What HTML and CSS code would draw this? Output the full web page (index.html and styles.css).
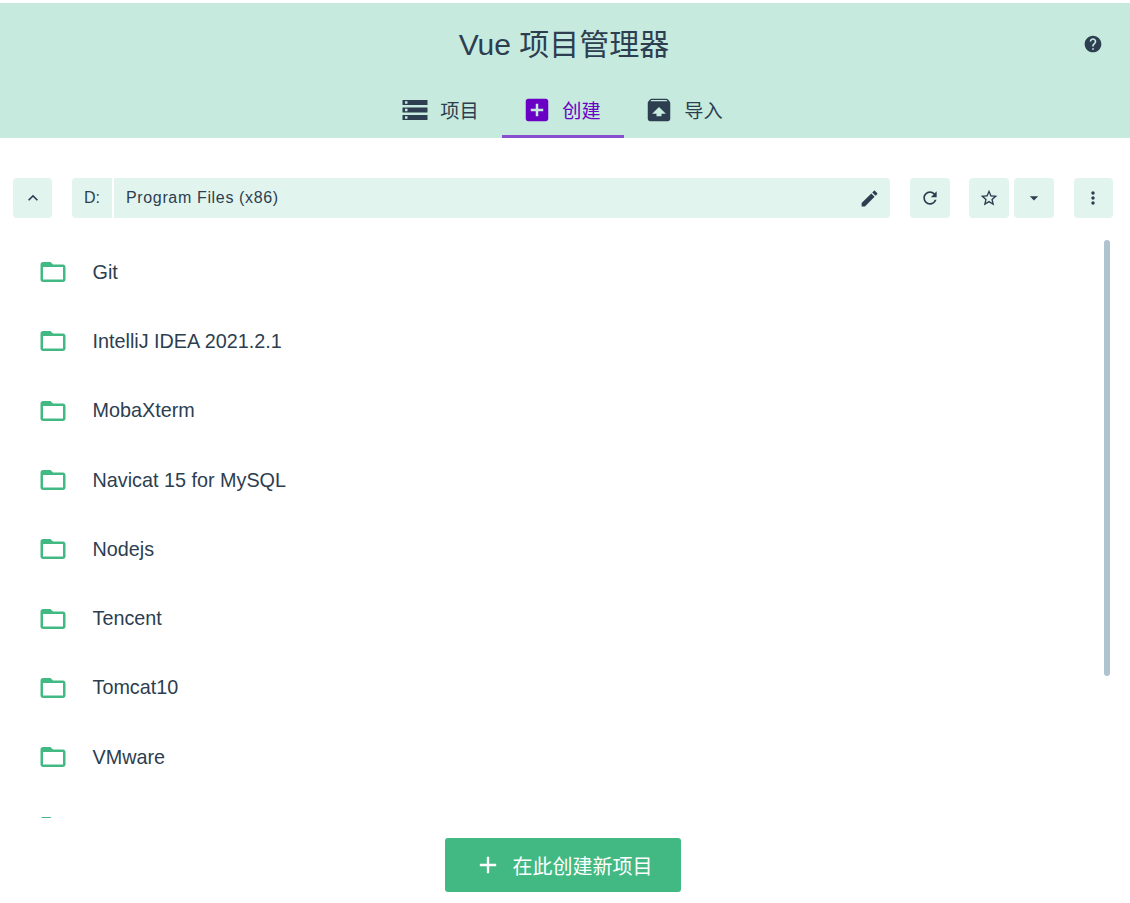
FILE: index.html
```html
<!DOCTYPE html>
<html lang="zh">
<head>
<meta charset="utf-8">
<title>Vue 项目管理器</title>
<link rel="stylesheet" href="styles.css">
</head>
<body>
<div class="app">
  <header class="header">
    <div class="title-row">
      <h1 class="title">Vue 项目管理器</h1>
      <svg class="help" viewBox="0 0 24 24"><path d="M12 2C6.48 2 2 6.48 2 12s4.48 10 10 10 10-4.48 10-10S17.52 2 12 2zm1 17h-2v-2h2v2zm2.07-7.75l-.9.92C13.45 12.9 13 13.5 13 15h-2v-.5c0-1.1.45-2.1 1.17-2.83l1.24-1.26c.37-.36.59-.86.59-1.41 0-1.1-.9-2-2-2s-2 .9-2 2H8c0-2.21 1.79-4 4-4s4 1.79 4 4c0 .88-.36 1.68-.93 2.25z"/></svg>
    </div>
    <nav class="tabs">
      <div class="tab">
        <svg class="tab-icon" viewBox="0 0 24 24"><path d="M2 20h20v-4H2v4zm2-3h2v2H4v-2zM2 4v4h20V4H2zm4 3H4V5h2v2zm-4 7h20v-4H2v4zm2-3h2v2H4v-2z"/></svg>
        <span>项目</span>
      </div>
      <div class="tab tab-active">
        <svg class="tab-icon" viewBox="0 0 24 24"><path d="M19 3H5c-1.11 0-2 .9-2 2v14c0 1.1.89 2 2 2h14c1.1 0 2-.9 2-2V5c0-1.1-.9-2-2-2zm-2 10h-4v4h-2v-4H7v-2h4V7h2v4h4v2z"/></svg>
        <span>创建</span>
      </div>
      <div class="tab">
        <svg class="tab-icon" viewBox="0 0 24 24"><path d="M20.55 5.22l-1.39-1.68C18.88 3.21 18.47 3 18 3H6c-.47 0-.88.21-1.15.55L3.46 5.22C3.17 5.57 3 6.01 3 6.5V19c0 1.1.89 2 2 2h14c1.1 0 2-.9 2-2V6.5c0-.49-.17-.93-.45-1.28zM12 9.5l5.5 5.5H14v2h-4v-2H6.5L12 9.5zM5.12 5l.82-1h12l.93 1H5.12z"/></svg>
        <span>导入</span>
      </div>
    </nav>
  </header>

  <div class="toolbar">
    <button class="btn btn-up"><svg class="tool-icon" viewBox="0 0 24 24"><path d="M7.41 15.41L12 10.83l4.59 4.58L18 14l-6-6-6 6z"/></svg></button>
    <div class="path">
      <div class="drive">D:</div>
      <div class="path-field">
        <span class="path-text">Program Files (x86)</span>
        <svg class="edit-icon" viewBox="0 0 24 24"><path d="M3 17.25V21h3.75L17.81 9.94l-3.75-3.75L3 17.25zM20.71 7.04c.39-.39.39-1.02 0-1.41l-2.34-2.34c-.39-.39-1.02-.39-1.41 0l-1.83 1.83 3.75 3.75 1.83-1.83z"/></svg>
      </div>
    </div>
    <button class="btn btn-refresh"><svg class="tool-icon" viewBox="0 0 24 24"><path d="M17.65 6.35C16.2 4.9 14.21 4 12 4c-4.42 0-7.99 3.58-7.99 8s3.57 8 7.99 8c3.73 0 6.84-2.55 7.73-6h-2.08c-.82 2.33-3.04 4-5.65 4-3.31 0-6-2.69-6-6s2.69-6 6-6c1.66 0 3.14.69 4.22 1.78L13 11h7V4l-2.35 2.35z"/></svg></button>
    <button class="btn btn-star"><svg class="tool-icon" viewBox="0 0 24 24"><path d="M22 9.24l-7.19-.62L12 2 9.19 8.63 2 9.24l5.46 4.73L5.82 21 12 17.27 18.18 21l-1.63-7.03L22 9.24zM12 15.4l-3.76 2.27 1-4.28-3.32-2.88 4.38-.38L12 6.1l1.71 4.04 4.38.38-3.32 2.88 1 4.28L12 15.4z"/></svg></button>
    <button class="btn btn-drop"><svg class="tool-icon" viewBox="0 0 24 24"><path d="M7 10l5 5 5-5z"/></svg></button>
    <button class="btn btn-more"><svg class="tool-icon" viewBox="0 0 24 24"><path d="M12 8c1.1 0 2-.9 2-2s-.9-2-2-2-2 .9-2 2 .9 2 2 2zm0 2c-1.1 0-2 .9-2 2s.9 2 2 2 2-.9 2-2-.9-2-2-2zm0 6c-1.1 0-2 .9-2 2s.9 2 2 2 2-.9 2-2-.9-2-2-2z"/></svg></button>
  </div>

  <main class="list-wrap">
    <div class="list">
      <div class="row"><svg class="folder" viewBox="0 0 24 24"><path d="M20 6h-8l-2-2H4c-1.1 0-1.99.9-1.99 2L2 18c0 1.1.9 2 2 2h16c1.1 0 2-.9 2-2V8c0-1.1-.9-2-2-2zm0 12H4V8h16v10z"/></svg><span>Git</span></div>
      <div class="row"><svg class="folder" viewBox="0 0 24 24"><path d="M20 6h-8l-2-2H4c-1.1 0-1.99.9-1.99 2L2 18c0 1.1.9 2 2 2h16c1.1 0 2-.9 2-2V8c0-1.1-.9-2-2-2zm0 12H4V8h16v10z"/></svg><span>IntelliJ IDEA 2021.2.1</span></div>
      <div class="row"><svg class="folder" viewBox="0 0 24 24"><path d="M20 6h-8l-2-2H4c-1.1 0-1.99.9-1.99 2L2 18c0 1.1.9 2 2 2h16c1.1 0 2-.9 2-2V8c0-1.1-.9-2-2-2zm0 12H4V8h16v10z"/></svg><span>MobaXterm</span></div>
      <div class="row"><svg class="folder" viewBox="0 0 24 24"><path d="M20 6h-8l-2-2H4c-1.1 0-1.99.9-1.99 2L2 18c0 1.1.9 2 2 2h16c1.1 0 2-.9 2-2V8c0-1.1-.9-2-2-2zm0 12H4V8h16v10z"/></svg><span>Navicat 15 for MySQL</span></div>
      <div class="row"><svg class="folder" viewBox="0 0 24 24"><path d="M20 6h-8l-2-2H4c-1.1 0-1.99.9-1.99 2L2 18c0 1.1.9 2 2 2h16c1.1 0 2-.9 2-2V8c0-1.1-.9-2-2-2zm0 12H4V8h16v10z"/></svg><span>Nodejs</span></div>
      <div class="row"><svg class="folder" viewBox="0 0 24 24"><path d="M20 6h-8l-2-2H4c-1.1 0-1.99.9-1.99 2L2 18c0 1.1.9 2 2 2h16c1.1 0 2-.9 2-2V8c0-1.1-.9-2-2-2zm0 12H4V8h16v10z"/></svg><span>Tencent</span></div>
      <div class="row"><svg class="folder" viewBox="0 0 24 24"><path d="M20 6h-8l-2-2H4c-1.1 0-1.99.9-1.99 2L2 18c0 1.1.9 2 2 2h16c1.1 0 2-.9 2-2V8c0-1.1-.9-2-2-2zm0 12H4V8h16v10z"/></svg><span>Tomcat10</span></div>
      <div class="row"><svg class="folder" viewBox="0 0 24 24"><path d="M20 6h-8l-2-2H4c-1.1 0-1.99.9-1.99 2L2 18c0 1.1.9 2 2 2h16c1.1 0 2-.9 2-2V8c0-1.1-.9-2-2-2zm0 12H4V8h16v10z"/></svg><span>VMware</span></div>
      <div class="row"><svg class="folder" viewBox="0 0 24 24"><path d="M20 6h-8l-2-2H4c-1.1 0-1.99.9-1.99 2L2 18c0 1.1.9 2 2 2h16c1.1 0 2-.9 2-2V8c0-1.1-.9-2-2-2zm0 12H4V8h16v10z"/></svg></div>
    </div>
    <div class="scroll-thumb"></div>
  </main>

  <footer class="footer">
    <button class="create">
      <svg class="create-icon" viewBox="0 0 24 24"><path d="M19 13h-6v6h-2v-6H5v-2h6V5h2v6h6v2z"/></svg>
      <span>在此创建新项目</span>
    </button>
  </footer>
</div>
</body>
</html>
```
FILE: styles.css
```css
* { box-sizing: border-box; }
html, body { margin: 0; height: 100%; background: #fff; }
body {
  font-family: "Liberation Sans", "Noto Sans CJK SC", sans-serif;
  color: #2c3e50;
  overflow: hidden;
}
.app {
  height: 903px;
  display: flex;
  flex-direction: column;
  padding: 3px 0;
  position: relative;
  background: #fff;
}
.header {
  height: 135px;
  flex: none;
  background: #c7eade;
  display: flex;
  flex-direction: column;
  position: relative;
}
.title-row {
  height: 82px;
  padding: 2px 2px 0 0;
  display: flex;
  align-items: center;
  justify-content: center;
  flex: none;
}
.title {
  margin: 0;
  font-size: 30px;
  font-weight: 400;
  line-height: 80px;
}
.help {
  position: absolute;
  left: 1083px;
  top: 31px;
  width: 20px;
  height: 20px;
  fill: #2c3e50;
}
.tabs {
  display: flex;
  justify-content: center;
  flex: 1;
  padding-right: 4px;
}
.tab {
  width: 122px;
  display: flex;
  align-items: center;
  justify-content: center;
  gap: 10px;
  font-size: 19.2px;
  padding: 0 3px 0 0;
  border-bottom: 3px solid transparent;
}
.tab-icon { width: 30px; height: 30px; fill: #2c3e50; flex: none; }
.tab-active { color: #6a00c4; border-bottom-color: #8a4fcf; }
.tab-active .tab-icon { fill: #6a00c4; }

.toolbar {
  display: flex;
  flex: none;
  height: 40px;
  margin-top: 40px;
  padding: 0 17px 0 13px;
  align-items: stretch;
}
.btn {
  border: 0;
  padding: 0;
  background: #e2f4ee;
  border-radius: 4px;
  width: 40px;
  display: flex;
  align-items: center;
  justify-content: center;
  flex: none;
}
.tool-icon { width: 20px; height: 20px; fill: #2c3e50; }
.btn-up { width: 39px; margin-right: 20px; }
.btn-refresh { margin-left: 20px; }
.btn-star { margin-left: 19px; }
.btn-drop { margin-left: 5px; }
.btn-more { width: 39px; margin-left: 20px; padding-right: 1px; }
.path { display: flex; width: 818px; flex: none; gap: 2px; }
.drive {
  width: 40px;
  background: #e2f4ee;
  border-radius: 4px 0 0 4px;
  padding-left: 12px;
  font-size: 16px;
  line-height: 39px;
}
.path-field {
  flex: 1;
  background: #e2f4ee;
  border-radius: 0 4px 4px 0;
  display: flex;
  align-items: center;
  justify-content: space-between;
  padding: 0 10px 0 12px;
  font-size: 16px;
  letter-spacing: 0.65px;
}
.edit-icon { width: 21px; height: 21px; fill: #2c3e50; }

.list-wrap {
  flex: 1;
  position: relative;
  min-height: 0;
  margin-top: 19px;
  overflow: hidden;
}
.list { display: flex; flex-direction: column; padding-top: 0.5px; }
.row {
  height: 69.3px;
  flex: none;
  display: flex;
  align-items: center;
  padding-left: 37.5px;
  font-size: 19.8px;
  gap: 25px;
}
.folder { width: 30px; height: 30px; fill: #42b983; flex: none; }
.scroll-thumb {
  position: absolute;
  left: 1104px;
  top: 3px;
  width: 6px;
  height: 436px;
  background: #b0c4d0;
  border-radius: 3px;
}
.footer {
  flex: none;
  height: 82px;
  display: flex;
  justify-content: center;
  padding: 20px 4px 0 0;
}
.create {
  width: 236px;
  height: 54px;
  border: 0;
  border-radius: 3px;
  background: #42b983;
  color: #fff;
  font-family: "Liberation Sans", "Noto Sans CJK SC", sans-serif;
  font-size: 20px;
  display: flex;
  align-items: center;
  justify-content: center;
  gap: 11px;
  padding: 0;
}
.create-icon { width: 28px; height: 28px; fill: #fff; flex: none; }
```
